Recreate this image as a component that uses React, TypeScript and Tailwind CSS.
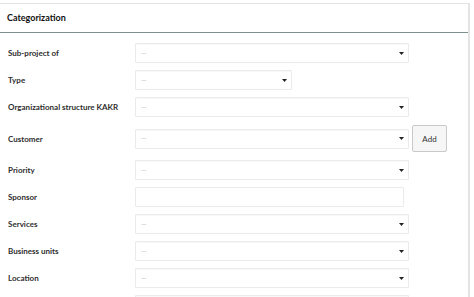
import React from "react";

function Caret() {
  return (
    <svg width="5" height="3" viewBox="0 0 5 3" className="shrink-0">
      <path d="M0 0 L5 0 L2.5 3 Z" fill="#222" />
    </svg>
  );
}

function Select({ w = "w-[274px]", empty = false }: { w?: string; empty?: boolean }) {
  return (
    <div
      className={`${w} h-[20px] border border-[#ebebeb] bg-white flex items-center justify-between pl-[5px] pr-[4px] rounded-[1px] shadow-[inset_0_1px_1px_rgba(0,0,0,0.03)]`}
    >
      {empty ? <span /> : <span className="text-[7px] text-[#c8c8c8] leading-none">—</span>}
      <Caret />
    </div>
  );
}

function Row({ label, children, h = "h-[20px]" }: { label: string; children: React.ReactNode; h?: string }) {
  return (
    <div className={`flex items-center ${h}`}>
      <div className="w-[135px] shrink-0 pl-[8px] text-[8px] font-bold text-[#2e2e2e] leading-none whitespace-nowrap">
        {label}
      </div>
      {children}
    </div>
  );
}

export default function App() {
  return (
    <div
      className="w-[474px] h-[297px] bg-white overflow-hidden pt-[3px]"
      style={{ fontFamily: "Lato, 'Noto Sans', sans-serif" }}
    >
      <div className="w-[470px] h-[300px] border-t border-r-2 border-[#e4e4e4] bg-white">
        <div className="h-[29px] flex items-center pl-[7px] border-b border-[#7e8f8f]">
          <span className="text-[9px] font-bold text-[#111]">Categorization</span>
        </div>
        <div className="flex flex-col gap-[7px] pt-[10px]">
          <Row label="Sub-project of">
            <Select />
          </Row>
          <Row label="Type">
            <Select w="w-[157px]" />
          </Row>
          <Row label="Organizational structure KAKR">
            <Select />
          </Row>
          <Row label="Customer" h="h-[29px]">
            <Select />
            <button className="ml-[3px] w-[35px] h-[27px] border border-[#c9c9c9] bg-[#f6f6f6] rounded-[2px] text-[8px] text-[#333]">
              Add
            </button>
          </Row>
          <Row label="Priority">
            <Select />
          </Row>
          <Row label="Sponsor">
            <div className="w-[269px] h-[20px] border border-[#ebebeb] bg-white rounded-[1px]" />
          </Row>
          <Row label="Services">
            <Select />
          </Row>
          <Row label="Business units">
            <Select />
          </Row>
          <Row label="Location">
            <Select />
          </Row>
          <Row label="">
            <Select empty />
          </Row>
        </div>
      </div>
    </div>
  );
}
